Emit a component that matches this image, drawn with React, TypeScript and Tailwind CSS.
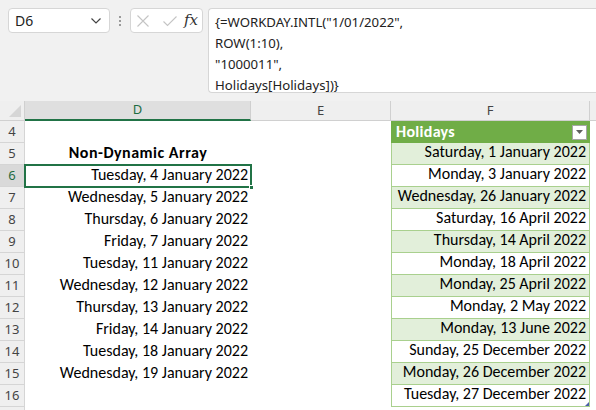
import React from 'react';

const cellFont = { fontFamily: 'Carlito, Lato, "Liberation Sans", sans-serif' };
const uiFont = { fontFamily: '"Segoe UI", "Noto Sans", "Open Sans", sans-serif' };

const dates = [
    'Tuesday, 4 January 2022',
    'Wednesday, 5 January 2022',
    'Thursday, 6 January 2022',
    'Friday, 7 January 2022',
    'Tuesday, 11 January 2022',
    'Wednesday, 12 January 2022',
    'Thursday, 13 January 2022',
    'Friday, 14 January 2022',
    'Tuesday, 18 January 2022',
    'Wednesday, 19 January 2022',
];

const holidays = [
    'Saturday, 1 January 2022',
    'Monday, 3 January 2022',
    'Wednesday, 26 January 2022',
    'Saturday, 16 April 2022',
    'Thursday, 14 April 2022',
    'Monday, 18 April 2022',
    'Monday, 25 April 2022',
    'Monday, 2 May 2022',
    'Monday, 13 June 2022',
    'Sunday, 25 December 2022',
    'Monday, 26 December 2022',
    'Tuesday, 27 December 2022',
];

const FormulaBar: React.FC = () => (
    <div className="h-[101px] flex items-start pt-2 pl-2 gap-0" style={uiFont}>
        <div className="w-[102px] h-[25px] bg-white border border-[#d6d6d6] rounded-[4px] flex items-center justify-between pl-[6px] pr-[6px] text-[14px] text-[#222]">
            <span>D6</span>
            <svg width="12" height="8" viewBox="0 0 12 8" className="mr-[1px]">
                <path d="M1.5 1.5 L6 6 L10.5 1.5" fill="none" stroke="#444" strokeWidth="1.2" />
            </svg>
        </div>
        <div className="w-[20px] h-[25px] flex flex-col items-center justify-center gap-[2px]">
            <span className="w-[2px] h-[2px] bg-[#9a9a9a]"></span>
            <span className="w-[2px] h-[2px] bg-[#9a9a9a]"></span>
            <span className="w-[2px] h-[2px] bg-[#9a9a9a]"></span>
        </div>
        <div className="w-[73px] h-[25px] bg-white border border-[#d6d6d6] rounded-[4px] flex items-center pl-[5px] pr-[4px]">
            <svg width="14" height="14" viewBox="0 0 14 14">
                <path d="M1.5 1.5 L12.5 12.5 M12.5 1.5 L1.5 12.5" stroke="#c4c4c4" strokeWidth="1.1" />
            </svg>
            <svg width="16" height="14" viewBox="0 0 16 14" className="ml-[12px]">
                <path d="M1.5 7.5 L5.5 11.5 L14.5 2.5" fill="none" stroke="#c4c4c4" strokeWidth="1.1" />
            </svg>
            <span className="ml-auto text-[15px] italic text-[#333] leading-none" style={{ fontFamily: '"DejaVu Serif", "Liberation Serif", serif' }}>
                fx
            </span>
        </div>
        <div className="ml-[5px] flex-1 h-[85px] bg-white border border-[#d6d6d6] rounded-l-[4px] border-r-0 pl-[6px] pt-[3px] text-[13.2px] leading-[21px] text-[#222]">
            <div>{'{=WORKDAY.INTL("1/01/2022",'}</div>
            <div>ROW(1:10),</div>
            <div>"1000011",</div>
            <div>{'Holidays[Holidays])}'}</div>
        </div>
    </div>
);

const ColumnHeader: React.FC = () => (
    <div className="flex h-[20px] bg-[#efefef] text-[13px] text-[#444]" style={uiFont}>
        <div className="w-[25px] h-full border-r border-b border-[#d0d0d0] relative">
            <svg width="12" height="12" viewBox="0 0 12 12" className="absolute right-[3px] bottom-[3px]">
                <path d="M12 0 L12 12 L0 12 Z" fill="#d6d6d6" />
            </svg>
        </div>
        <div className="w-[226px] h-full bg-[#dfdfdf] border-r border-[#cfcfcf] border-b-2 border-b-[#217346] flex items-center justify-center text-[#1e6c41]">
            D
        </div>
        <div className="w-[140px] h-full border-r border-b border-[#d0d0d0] flex items-center justify-center">E</div>
        <div className="w-[199px] h-full border-r border-b border-[#d0d0d0] flex items-center justify-center">F</div>
        <div className="flex-1 h-full border-b border-[#d0d0d0]"></div>
    </div>
);

const Row: React.FC<{ n: number }> = ({ n }) => {
    const selected = n === 6;
    const d = n === 5 ? 'Non-Dynamic Array' : n >= 6 && n <= 15 ? dates[n - 6] : '';
    const hIdx = n - 5;
    const isHeader = n === 4;
    const hText = hIdx >= 0 ? holidays[hIdx] : '';
    const stripe = hIdx >= 0 && hIdx % 2 === 0;

    return (
        <div className="flex h-[22px] bg-white">
            <div
                className={
                    'w-[25px] h-full border-r border-b border-[#d5d5d5] flex items-center justify-center text-[13px] ' +
                    (selected ? 'bg-[#d9d9d9] text-[#1e6c41]' : 'bg-[#efefef] text-[#444]')
                }
                style={uiFont}
            >
                {n}
            </div>
            <div className="w-[226px] h-full relative" style={cellFont}>
                {n === 5 ? (
                    <div className="h-full flex items-end justify-center font-bold text-[16px] tracking-[0.5px] text-black">{d}</div>
                ) : (
                    <div className="h-full flex items-end justify-end pr-[3px] text-[16px] text-black">{d}</div>
                )}
                {selected && (
                    <>
                        <div className="absolute left-[-1px] top-[-1px] right-[-1px] bottom-[-1px] border-2 border-[#217346]"></div>
                        <div className="absolute right-[-3px] bottom-[-3px] w-[5px] h-[5px] bg-[#217346] border border-white"></div>
                    </>
                )}
            </div>
            <div className="w-[140px] h-full"></div>
            {isHeader ? (
                <div
                    className="w-[199px] h-full bg-[#70ad47] border-x border-[#70ad47] flex items-center justify-between pl-[4px] pr-[2px] text-white font-bold text-[16px] tracking-[0.3px]"
                    style={cellFont}
                >
                    <span>Holidays</span>
                    <div className="w-[15px] h-[15px] bg-white border border-[#a6a6a6] flex items-center justify-center">
                        <svg width="7" height="4" viewBox="0 0 7 4">
                            <path d="M0 0 L7 0 L3.5 4 Z" fill="#606060" />
                        </svg>
                    </div>
                </div>
            ) : (
                <div
                    className={
                        'w-[199px] h-full border-x border-b border-[#a9d08e] flex items-end justify-end pr-[3px] text-[16px] text-black relative ' +
                        (stripe ? 'bg-[#e2efda]' : 'bg-white')
                    }
                    style={cellFont}
                >
                    {hText}
                    {n === 16 && (
                        <svg width="4" height="4" viewBox="0 0 4 4" className="absolute right-0 bottom-0">
                            <path d="M4 0 L4 4 L0 4 Z" fill="#4a5fa8" />
                        </svg>
                    )}
                </div>
            )}
            <div className="flex-1 h-full"></div>
        </div>
    );
};

export default function App() {
    const rows = Array.from({ length: 13 }, (_, i) => i + 4);
    return (
        <div className="w-[596px] h-[410px] overflow-hidden bg-[#f1f1f1]">
            <FormulaBar />
            <ColumnHeader />
            {rows.map((n) => (
                <Row key={n} n={n} />
            ))}
            <div className="flex h-[22px] bg-white">
                <div className="w-[25px] h-full border-r border-[#d5d5d5] bg-[#efefef]"></div>
            </div>
        </div>
    );
}
